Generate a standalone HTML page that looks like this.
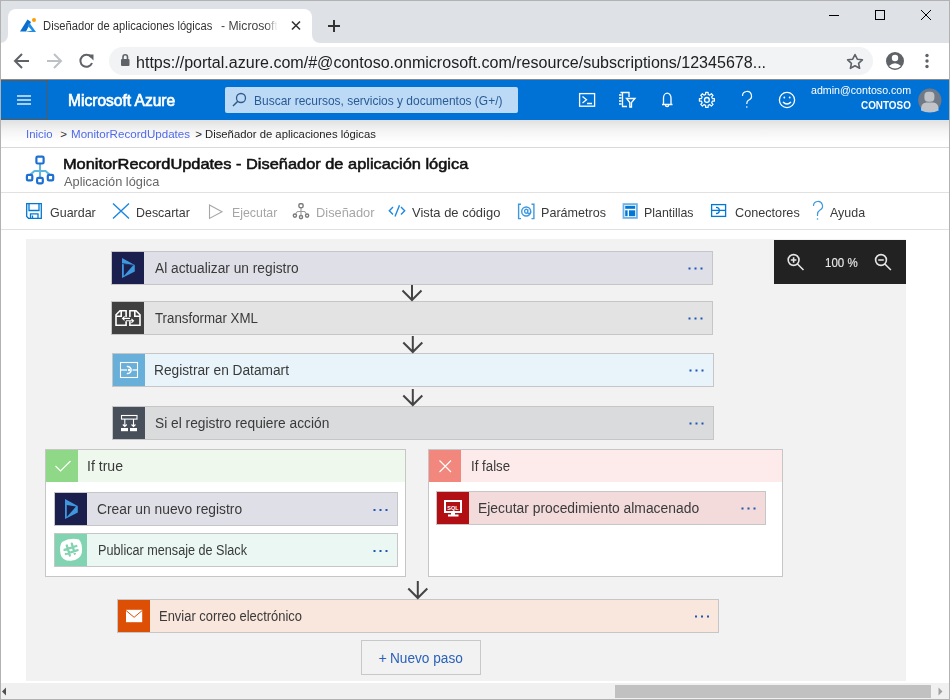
<!DOCTYPE html>
<html><head><meta charset="utf-8">
<style>
*{box-sizing:border-box;margin:0;padding:0}
html,body{width:950px;height:700px;overflow:hidden;background:#fff;font-family:"Liberation Sans",sans-serif;position:relative}
.a{position:absolute}
.tx{position:absolute;white-space:nowrap}
svg{position:absolute;left:0;top:0;overflow:visible}

</style></head><body>
<!-- tab strip -->
<div class="a" style="left:0;top:0;width:950px;height:43px;background:#dee1e6"></div>
<div class="a" style="left:0;top:34px;width:320px;height:9px;background:#fff"></div>
<div class="a" style="left:0;top:26px;width:8px;height:17px;background:#dee1e6;border-bottom-right-radius:8px"></div>
<div class="a" style="left:312px;top:26px;width:8px;height:17px;background:#dee1e6;border-bottom-left-radius:8px"></div>
<div class="a" style="left:8px;top:9px;width:304px;height:34px;background:#fff;border-radius:8px 8px 0 0"></div>
<!-- toolbar url pill -->
<div class="a" style="left:109px;top:47px;width:764px;height:28px;background:#f1f3f4;border-radius:14px"></div>
<div class="a" style="left:0;top:79px;width:950px;height:1px;background:#8d8883"></div>
<!-- azure header -->
<div class="a" style="left:0;top:80px;width:950px;height:40px;background:#0072d6"></div>
<div class="a" style="left:0;top:80px;width:48px;height:40px;border:1px solid #5a5a5a;border-left:none"></div>
<div class="a" style="left:225px;top:87px;width:293px;height:26px;background:#bcdaf6;border-radius:2px"></div>
<!-- breadcrumb shadow -->
<div class="a" style="left:0;top:120px;width:950px;height:22px;background:linear-gradient(#e0e0e0,#f3f3f3 45%,#fff)"></div>
<div class="a" style="left:0;top:147px;width:950px;height:1px;background:#d9d9d9"></div>
<div class="a" style="left:0;top:192px;width:950px;height:1px;background:#e1e1e1"></div>
<div class="a" style="left:0;top:229px;width:950px;height:1px;background:#e1e1e1"></div>
<!-- canvas -->
<div class="a" style="left:26px;top:239px;width:880px;height:442px;background:#f2f2f2"></div>
<!-- zoom box -->
<div class="a" style="left:774px;top:240px;width:132px;height:44px;background:#222"></div>
<!-- scrollbar -->
<div class="a" style="left:0;top:683px;width:950px;height:17px;background:#f0f0f0"></div>
<div class="a" style="left:615px;top:685px;width:316px;height:13px;background:#c1c1c1"></div>

<!-- cards -->
<div class="a" style="left:111px;top:251px;width:602px;height:34px;border:1px solid #c6c6c6;background:#dfdfe8"></div>
<div class="a" style="left:112px;top:252px;width:32px;height:32px;background:#1b1f4e"></div>
<div class="a" style="left:111px;top:301px;width:602px;height:34px;border:1px solid #c6c6c6;background:#e3e3e3"></div>
<div class="a" style="left:112px;top:302px;width:32px;height:32px;background:#404040"></div>
<div class="a" style="left:112px;top:353px;width:602px;height:34px;border:1px solid #c6c6c6;background:#e8f3fa"></div>
<div class="a" style="left:113px;top:354px;width:32px;height:32px;background:#68b0da"></div>
<div class="a" style="left:112px;top:406px;width:602px;height:34px;border:1px solid #c6c6c6;background:#dadbdd"></div>
<div class="a" style="left:113px;top:407px;width:32px;height:32px;background:#474f5a"></div>

<!-- if true -->
<div class="a" style="left:45px;top:449px;width:361px;height:128px;border:1px solid #c6c6c6;background:#fff"></div>
<div class="a" style="left:46px;top:450px;width:359px;height:32px;background:#eef8ec"></div>
<div class="a" style="left:46px;top:450px;width:32px;height:32px;background:#8fd887"></div>
<div class="a" style="left:54px;top:492px;width:344px;height:34px;border:1px solid #c6c6c6;background:#dfdfe8"></div>
<div class="a" style="left:55px;top:493px;width:32px;height:32px;background:#1b1f4e"></div>
<div class="a" style="left:54px;top:533px;width:344px;height:34px;border:1px solid #c6c6c6;background:#eaf7f3"></div>
<div class="a" style="left:55px;top:534px;width:32px;height:32px;background:#82d3b1"></div>

<!-- if false -->
<div class="a" style="left:428px;top:449px;width:355px;height:128px;border:1px solid #c6c6c6;background:#fff"></div>
<div class="a" style="left:429px;top:450px;width:353px;height:32px;background:#fdeaea"></div>
<div class="a" style="left:429px;top:450px;width:32px;height:32px;background:#f2877e"></div>
<div class="a" style="left:436px;top:491px;width:330px;height:34px;border:1px solid #c6c6c6;background:#f3dadb"></div>
<div class="a" style="left:437px;top:492px;width:32px;height:32px;background:#b20f14"></div>

<!-- email -->
<div class="a" style="left:117px;top:599px;width:602px;height:34px;border:1px solid #c6c6c6;background:#f9e6dc"></div>
<div class="a" style="left:118px;top:600px;width:32px;height:32px;background:#dc4f04"></div>

<!-- nuevo paso -->
<div class="a" style="left:361px;top:640px;width:120px;height:35px;border:1px solid #c8c8c8;background:#f2f2f2"></div>

<svg width="950" height="700">
  <!-- azure logo -->
  <path d="M27.5 19.5 L20 31.5 H26 L31 22 Z" fill="#0a6fcc"/>
  <path d="M29.5 23 L36 32 H25.5 L32 30.5 L27.5 25.5 Z" fill="#1e8ee6"/>
  <circle cx="34" cy="20" r="2" fill="#ff9c00"/>
  <!-- tab close -->
  <path d="M292 21.5 L300 29.5 M300 21.5 L292 29.5" stroke="#333" stroke-width="1.6"/>
  <!-- new tab plus -->
  <path d="M334 20 V32 M328 26 H340" stroke="#333" stroke-width="2"/>
  <!-- window controls -->
  <path d="M829 15.5 H839" stroke="#000" stroke-width="1"/>
  <rect x="875.5" y="10.5" width="9" height="9" fill="none" stroke="#000" stroke-width="1"/>
  <path d="M921 10 L931 20 M931 10 L921 20" stroke="#000" stroke-width="1"/>
  <g transform="translate(0,43)">
  <!-- back -->
  <path d="M15.5 18 H29 M22 11 L15 18 L22 25" fill="none" stroke="#5f6368" stroke-width="2"/>
  <path d="M47 18 H60.5 M54 11 L61 18 L54 25" fill="none" stroke="#bdc1c6" stroke-width="2"/>
  <path d="M91.2 14.2 A6 6 0 1 0 92 20" fill="none" stroke="#5f6368" stroke-width="2"/>
  <path d="M87.5 11.5 H93.5 V17.5 Z" fill="#5f6368"/>
  <rect x="121" y="16" width="8.5" height="7" rx="1" fill="#5f6368"/>
  <path d="M123 16.5 V14 A2.25 2.25 0 0 1 127.5 14 V16.5" fill="none" stroke="#5f6368" stroke-width="1.6"/>
  <path d="M855 11.5 L857.3 16.2 L862.4 16.8 L858.6 20.3 L859.6 25.3 L855 22.8 L850.4 25.3 L851.4 20.3 L847.6 16.8 L852.7 16.2 Z" fill="none" stroke="#5f6368" stroke-width="1.6" stroke-linejoin="round"/>
  <circle cx="895" cy="18" r="9" fill="#5f6368"/>
  <circle cx="895" cy="15" r="3.2" fill="#fff"/>
  <path d="M889 23 Q895 17.5 901 23 Q895 28 889 23 Z" fill="#fff"/>
  <circle cx="927" cy="12.5" r="1.7" fill="#5f6368"/>
  <circle cx="927" cy="18" r="1.7" fill="#5f6368"/>
  <circle cx="927" cy="23.5" r="1.7" fill="#5f6368"/>
  </g>
  <!-- hamburger -->
  <path d="M17 96 H31 M17 100 H31 M17 104 H31" stroke="#a9cdf1" stroke-width="2"/>
  <!-- search icon -->
  <circle cx="241" cy="98" r="4.5" fill="none" stroke="#305a8a" stroke-width="1.3"/>
  <path d="M237.8 101.2 L233 106" stroke="#305a8a" stroke-width="1.5"/>
  <!-- header icons -->
  <g fill="none" stroke="#fff" stroke-width="1.3">
    <rect x="579.6" y="93.6" width="15" height="12.6"/>
    <path d="M582.5 96.5 L586.5 99.8 L582.5 103 M587 103.5 H592"/>
    <path d="M620.5 92.5 H629 V97 M622.5 92.5 V106.5 H627 M619 95 H621.5 M619 98 H621.5 M619 101 H621.5 M619 104 H621.5"/>
    <path d="M626.5 98.5 H635 L631.5 102.5 V107 H629.8 V102.5 Z"/>
    <path d="M662 104.5 H672.5 M663.5 104.5 V98 A3.5 4.5 0 0 1 671 98 V104.5 M665.5 105 A1.6 1.6 0 0 0 668.7 105"/>
    <circle cx="706.9" cy="99.9" r="2.4"/>
    <circle cx="787" cy="100" r="7.6"/>
    <path d="M783 102 Q787 106 791 102"/>
  </g>
  <path d="M714.41 98.71 L714.41 101.09 L712.35 101.21 L711.67 102.83 L713.05 104.37 L711.37 106.05 L709.83 104.67 L708.21 105.35 L708.09 107.41 L705.71 107.41 L705.59 105.35 L703.97 104.67 L702.43 106.05 L700.75 104.37 L702.13 102.83 L701.45 101.21 L699.39 101.09 L699.39 98.71 L701.45 98.59 L702.13 96.97 L700.75 95.43 L702.43 93.75 L703.97 95.13 L705.59 94.45 L705.71 92.39 L708.09 92.39 L708.21 94.45 L709.83 95.13 L711.37 93.75 L713.05 95.43 L711.67 96.97 L712.35 98.59 Z" fill="none" stroke="#fff" stroke-width="1.2" stroke-linejoin="round"/>
  <path d="M742.5 96 A4.5 4.5 0 1 1 748.5 100.2 Q746.8 101.2 746.8 103.5 V104" fill="none" stroke="#fff" stroke-width="1.2"/>
  <circle cx="746.8" cy="107" r="0.8" fill="#fff"/>
  <circle cx="784.3" cy="97.5" r="0.9" fill="#fff"/>
  <circle cx="789.7" cy="97.5" r="0.9" fill="#fff"/>
  <!-- avatar -->
  <circle cx="929.8" cy="100.2" r="11.6" fill="#707a87"/>
  <rect x="924.4" y="91.8" width="10" height="10" rx="4" fill="#c0c3c7"/>
  <path d="M921 110.5 Q920.5 103 926 102.5 H933.5 Q939 103 938.6 110.5 Q934.5 112.5 929.8 112.5 Q925 112.5 921 110.5 Z" fill="#c0c3c7"/>
  <!-- title icon -->
  <g fill="none">
    <path d="M40 164 V177.5 M40 171 H34.5 L30.5 174.5 M40 171 H45.5 L49.5 174.5" stroke="#5cb6df" stroke-width="2"/>
    <rect x="36.4" y="156.7" width="7.2" height="6.8" rx="1.2" stroke="#1d6fd1" stroke-width="2.2"/>
    <rect x="26.9" y="174.9" width="5.4" height="5.5" rx="1.2" stroke="#1d6fd1" stroke-width="2.2"/>
    <rect x="37.1" y="177.9" width="5.7" height="5.4" rx="1.2" stroke="#1d6fd1" stroke-width="2.2"/>
    <rect x="47.8" y="174.9" width="5.4" height="5.5" rx="1.2" stroke="#1d6fd1" stroke-width="2.2"/>
  </g>
  <!-- toolbar icons -->
  <g fill="none" stroke="#0078d4" stroke-width="1.3">
    <path d="M26.7 203.7 H41.3 V218.3 H28.5 L26.7 216.5 Z"/>
    <path d="M29 203.7 V210.5 H39 V203.7 M30.5 218.3 V213.8 H38 V218.3 M32.5 215.5 V218.3"/>
    <path d="M113 203.5 L129 218.5 M129 203.5 L113 218.5" stroke="#1a86e0" stroke-width="1.4"/>
  </g>
  <path d="M209.5 205 L222 211.7 L209.5 218.4 Z" fill="none" stroke="#a6a6a6" stroke-width="1.1"/>
  <g fill="none" stroke="#7a7a7a" stroke-width="1.4">
    <rect x="298.9" y="203.7" width="4.2" height="4" rx="1.4"/>
    <circle cx="294.9" cy="215.6" r="1.6"/>
    <circle cx="301" cy="217.1" r="1.6"/>
    <circle cx="307.1" cy="215.6" r="1.6"/>
  </g>
  <path d="M301 207.7 V215.5 M297.5 211.5 H304.5 L306.6 214 M297.5 211.5 L295.4 214" fill="none" stroke="#9a9a9a" stroke-width="1.1"/>
  <g fill="none" stroke="#1e88e5" stroke-width="1.4">
    <path d="M393 207 L389.3 210.8 L393 214.6 M401 207 L404.7 210.8 L401 214.6 M399.5 205.3 L395 216.5"/>
  </g>
  <g fill="none" stroke="#3d98de" stroke-width="1.4">
    <path d="M521 204.2 H518.6 V218.6 H521 M531.5 204.2 H533.9 V218.6 H531.5"/>
    <circle cx="526.2" cy="211.5" r="4.5"/>
    <path d="M527.8 209.2 V212.5 Q527.8 213.8 529 213.8 Q530.7 213.8 530.7 211.5 M527.8 211.3 A1.6 2 0 1 1 527.8 211.2"/>
  </g>
  <rect x="622.6" y="203.2" width="15.2" height="15.6" fill="#6db2ea"/>
  <rect x="624.4" y="205" width="11.6" height="12" fill="#fff"/>
  <rect x="625.2" y="205.8" width="10" height="3" fill="#0078d4"/>
  <rect x="625.2" y="210.3" width="2.4" height="5.9" fill="#0078d4"/>
  <rect x="629" y="210.3" width="6.2" height="5.9" fill="#0078d4"/>
  <g fill="none" stroke="#0078d4" stroke-width="1.3">
    <rect x="711.6" y="204.6" width="14" height="11.8"/>
    <path d="M711.6 210.4 H725.6"/>
    <path d="M716 207.3 A3.3 3.1 0 1 1 716 213.5"/>
  </g>
  <path d="M813.5 206 A4.5 4.5 0 1 1 820 210 Q817.5 211.5 817.5 214.5 V216" fill="none" stroke="#3d98de" stroke-width="1.2"/>
  <circle cx="817.5" cy="219" r="0.8" fill="#3d98de"/>
  <!-- zoom box icons -->
  <g fill="none" stroke="#e6e6e6" stroke-width="1.6">
    <circle cx="793.6" cy="260" r="5.4"/>
    <path d="M797.5 264 L803.5 270 M790.8 260 H796.4 M793.6 257.2 V262.8"/>
    <circle cx="881" cy="260" r="5.4"/>
    <path d="M884.9 264 L890.9 270 M878.2 260 H883.8"/>
  </g>
  <!-- card icons -->
  <path d="M122 258 L134.8 265 L134.8 271.5 L122 278 Z" fill="#3f97de"/>
  <path d="M123.8 264 L133 265.6 L123.8 276 Z" fill="#1b1f4e"/>
  <path d="M122.2 263.6 L133.5 265.3" stroke="#1b1f4e" stroke-width="0.8"/>
  <g fill="none" stroke="#fff" stroke-width="1.6">
    <path d="M126.1 317 V310.8 H120 L116 314.8 V325.3 H126.1 V321.3 M121.2 311 V316.2 H116.2"/>
    <path d="M129.9 317 V310.8 H136 L140 314.8 V325.3 H129.9 V321.3 M134.8 311 V316.2 H139.8"/>
  </g>
  <g fill="none" stroke="#fff" stroke-width="1.1">
    <path d="M122.5 318.4 H130 M124.6 316.4 L122.5 318.4 L124.6 320.4 M126 320.8 H133.5 M131.4 318.8 L133.5 320.8 L131.4 322.8"/>
  </g>
  <g fill="none" stroke="#fff" stroke-width="1.1">
    <rect x="120.5" y="362.5" width="17" height="15"/>
    <path d="M120.5 370 H127 M132.5 370 H137.5" stroke-opacity="0.85" stroke-width="1.3"/>
    <path d="M126.8 366.6 A3.5 3.5 0 1 1 126.8 373.4" stroke-width="1.5"/>
  </g>
  <circle cx="129" cy="370" r="1.2" fill="#fff"/>
  <g fill="none" stroke="#fff" stroke-width="1.1">
    <rect x="121.5" y="415.5" width="15.5" height="3.6"/>
    <path d="M124.8 419 V427 M133.5 419 V427 M122.8 424.5 L124.8 426.5 L126.8 424.5 M131.5 424.5 L133.5 426.5 L135.5 424.5"/>
  </g>
  <rect x="121" y="428" width="7" height="3.2" fill="#fff"/>
  <rect x="130" y="428" width="7" height="3.2" fill="#fff"/>
  <path d="M55.5 466 L60.5 471 L70.5 461" fill="none" stroke="#fff" stroke-width="1.1"/>
  <path d="M439.5 460.5 L451 472 M451 460.5 L439.5 472" fill="none" stroke="#fff" stroke-width="1.1"/>
  <!-- crear icon -->
  <path d="M65 499 L77.8 506 L77.8 512.5 L65 519 Z" fill="#3f97de"/>
  <path d="M66.8 505 L76 506.6 L66.8 517 Z" fill="#1b1f4e"/>
  <!-- slack -->
  <path d="M62 542 Q70 537 79 539.5 Q83 544 81.8 553 Q80 560 71 560.8 Q62 561 60.5 554 Q59 546 62 542 Z" fill="#fff"/>
  <g stroke="#82d3b1" stroke-width="2.3" fill="none" stroke-linecap="round">
    <path d="M66.8 545.5 L69.8 555.5 M71.8 543.7 L74.8 553.7 M64.5 549.8 L76.3 546 M65.8 554 L77.6 550.2"/>
  </g>
  <!-- sql -->
  <rect x="445" y="501" width="16" height="11" fill="none" stroke="#fff" stroke-width="2"/>
  <path d="M452 513 V515 M454 513 V515 M448 515.5 H458.5" stroke="#fff" stroke-width="2"/>
  <text x="453" y="509.5" font-size="5.5" font-weight="bold" fill="#fff" text-anchor="middle" font-family="Liberation Sans">SQL</text>
  <!-- email -->
  <rect x="126" y="609.8" width="16.2" height="12.4" fill="#fff"/>
  <path d="M126 610.5 L134.1 617.3 L142.2 610.5" fill="none" stroke="#dc4f04" stroke-width="1"/>
  <!-- arrows -->
  <g fill="none" stroke="#444" stroke-width="2">
    <path d="M412 285 V300 M402.5 290.5 L412 300 L421.5 290.5"/>
    <path d="M412.8 336 V352 M403.3 342.5 L412.8 352 L422.3 342.5"/>
    <path d="M412.8 389 V405 M403.3 395.5 L412.8 405 L422.3 395.5"/>
    <path d="M417.8 581 V598 M408.3 588.5 L417.8 598 L427.3 588.5"/>
  </g>
  <!-- dots -->
  <g fill="#1f56b4">
    <rect x="688.5" y="267.5" width="2" height="2"/><rect x="694.5" y="267.5" width="2" height="2"/><rect x="700.5" y="267.5" width="2" height="2"/>
    <rect x="688.5" y="317.5" width="2" height="2"/><rect x="694.5" y="317.5" width="2" height="2"/><rect x="700.5" y="317.5" width="2" height="2"/>
    <rect x="689.5" y="369.5" width="2" height="2"/><rect x="695.5" y="369.5" width="2" height="2"/><rect x="701.5" y="369.5" width="2" height="2"/>
    <rect x="689.5" y="422.5" width="2" height="2"/><rect x="695.5" y="422.5" width="2" height="2"/><rect x="701.5" y="422.5" width="2" height="2"/>
    <rect x="373.5" y="509" width="2" height="2"/><rect x="379.5" y="509" width="2" height="2"/><rect x="385.5" y="509" width="2" height="2"/>
    <rect x="373.5" y="550" width="2" height="2"/><rect x="379.5" y="550" width="2" height="2"/><rect x="385.5" y="550" width="2" height="2"/>
    <rect x="741.5" y="507.5" width="2" height="2"/><rect x="747.5" y="507.5" width="2" height="2"/><rect x="753.5" y="507.5" width="2" height="2"/>
    <rect x="695" y="615.5" width="2" height="2"/><rect x="701" y="615.5" width="2" height="2"/><rect x="707" y="615.5" width="2" height="2"/>
  </g>
  <!-- scroll arrows -->
  <path d="M2 691.5 L6 687.5 V695.5 Z" fill="#505050"/>
  <path d="M942.5 691.5 L938.5 687.5 V695.5 Z" fill="#a0a0a0"/>
</svg>

<div class="tx" style="left:43.00px;top:20px;font-size:12.5px;line-height:12.5px;font-weight:normal;color:#333;letter-spacing:0.000px;transform:scaleX(0.8948);transform-origin:1.00px 0;">Diseñador de aplicaciones lógicas</div>
<div class="tx" style="left:220.60px;top:20px;font-size:12.5px;line-height:12.5px;font-weight:normal;color:#444;letter-spacing:0.000px;transform:scaleX(0.9751);transform-origin:0.00px 0;-webkit-mask-image:linear-gradient(90deg,#000 80%,transparent 100%);">- Microsoft</div>
<div class="tx" style="left:135.70px;top:55px;font-size:16px;line-height:16px;font-weight:normal;color:#202124;letter-spacing:0.000px;transform:scaleX(1.0031);transform-origin:1.00px 0;">https://portal.azure.com/#@contoso.onmicrosoft.com/resource/subscriptions/12345678...</div>
<div class="tx" style="left:67.90px;top:93px;font-size:16px;line-height:16px;font-weight:normal;color:#fff;letter-spacing:0.000px;transform:scaleX(0.9715);transform-origin:1.00px 0;-webkit-text-stroke:0.7px #fff;">Microsoft Azure</div>
<div class="tx" style="left:254.00px;top:94px;font-size:13.5px;line-height:13.5px;font-weight:normal;color:#285b94;letter-spacing:0.000px;transform:scaleX(0.8862);transform-origin:1.00px 0;">Buscar recursos, servicios y documentos (G+/)</div>
<div class="tx" style="left:811.40px;top:85px;font-size:11.5px;line-height:11.5px;font-weight:normal;color:#fff;letter-spacing:0.000px;transform:scaleX(0.9255);transform-origin:0.00px 0;">admin@contoso.com</div>
<div class="tx" style="left:861.30px;top:100px;font-size:10.5px;line-height:10.5px;font-weight:bold;color:#fff;letter-spacing:0.000px;transform:scaleX(0.9426);transform-origin:0.00px 0;">CONTOSO</div>
<div class="tx" style="left:25.60px;top:129px;font-size:11.5px;line-height:11.5px;font-weight:normal;color:#4f6ae8;letter-spacing:0.000px;transform:scaleX(0.9902);transform-origin:1.00px 0;">Inicio</div>
<div class="tx" style="left:60.20px;top:129px;font-size:11.5px;line-height:11.5px;font-weight:normal;color:#333;letter-spacing:0.000px;">&gt;</div>
<div class="tx" style="left:70.80px;top:129px;font-size:11.5px;line-height:11.5px;font-weight:normal;color:#4f6ae8;letter-spacing:0.000px;transform:scaleX(1.0067);transform-origin:0.00px 0;">MonitorRecordUpdates</div>
<div class="tx" style="left:195.30px;top:129px;font-size:11.5px;line-height:11.5px;font-weight:normal;color:#222;letter-spacing:0.000px;">&gt;</div>
<div class="tx" style="left:205.20px;top:129px;font-size:11.5px;line-height:11.5px;font-weight:normal;color:#222;letter-spacing:0.000px;transform:scaleX(0.9826);transform-origin:0.00px 0;">Diseñador de aplicaciones lógicas</div>
<div class="tx" style="left:62.50px;top:156px;font-size:15px;line-height:15px;font-weight:normal;color:#111;letter-spacing:0.000px;transform:scaleX(1.0926);transform-origin:1.00px 0;-webkit-text-stroke:0.55px #111;">MonitorRecordUpdates - Diseñador de aplicación lógica</div>
<div class="tx" style="left:64.20px;top:175px;font-size:13px;line-height:13px;font-weight:normal;color:#666;letter-spacing:0.000px;transform:scaleX(0.9836);transform-origin:0.00px 0;">Aplicación lógica</div>
<div class="tx" style="left:49.80px;top:206px;font-size:13px;line-height:13px;font-weight:normal;color:#3a3a3a;letter-spacing:0.000px;transform:scaleX(0.9595);transform-origin:0.00px 0;">Guardar</div>
<div class="tx" style="left:136.00px;top:206px;font-size:13px;line-height:13px;font-weight:normal;color:#3a3a3a;letter-spacing:0.000px;transform:scaleX(0.9550);transform-origin:1.00px 0;">Descartar</div>
<div class="tx" style="left:232.10px;top:206px;font-size:13px;line-height:13px;font-weight:normal;color:#a6a6a6;letter-spacing:0.000px;transform:scaleX(0.9480);transform-origin:1.00px 0;">Ejecutar</div>
<div class="tx" style="left:316.00px;top:206px;font-size:13px;line-height:13px;font-weight:normal;color:#a6a6a6;letter-spacing:0.000px;transform:scaleX(0.9877);transform-origin:1.00px 0;">Diseñador</div>
<div class="tx" style="left:412.10px;top:206px;font-size:13px;line-height:13px;font-weight:normal;color:#3a3a3a;letter-spacing:0.000px;transform:scaleX(0.9963);transform-origin:0.00px 0;">Vista de código</div>
<div class="tx" style="left:540.80px;top:206px;font-size:13px;line-height:13px;font-weight:normal;color:#3a3a3a;letter-spacing:0.000px;transform:scaleX(0.9657);transform-origin:1.00px 0;">Parámetros</div>
<div class="tx" style="left:643.90px;top:206px;font-size:13px;line-height:13px;font-weight:normal;color:#3a3a3a;letter-spacing:0.000px;transform:scaleX(0.9510);transform-origin:1.00px 0;">Plantillas</div>
<div class="tx" style="left:735.00px;top:206px;font-size:13px;line-height:13px;font-weight:normal;color:#3a3a3a;letter-spacing:0.000px;transform:scaleX(0.9734);transform-origin:0.00px 0;">Conectores</div>
<div class="tx" style="left:829.90px;top:206px;font-size:13px;line-height:13px;font-weight:normal;color:#3a3a3a;letter-spacing:0.000px;transform:scaleX(0.9573);transform-origin:0.00px 0;">Ayuda</div>
<div class="tx" style="left:824.80px;top:256px;font-size:13px;line-height:13px;font-weight:normal;color:#e8e8e8;letter-spacing:0.000px;transform:scaleX(0.8874);transform-origin:0.00px 0;-webkit-text-stroke:0.15px #e8e8e8;">100 %</div>
<div class="tx" style="left:154.50px;top:261px;font-size:14px;line-height:14px;font-weight:normal;color:#3a3a3a;letter-spacing:0.000px;transform:scaleX(0.9816);transform-origin:0.00px 0;">Al actualizar un registro</div>
<div class="tx" style="left:154.50px;top:311px;font-size:14px;line-height:14px;font-weight:normal;color:#3a3a3a;letter-spacing:0.000px;transform:scaleX(0.9493);transform-origin:0.00px 0;">Transformar XML</div>
<div class="tx" style="left:154.10px;top:363px;font-size:14px;line-height:14px;font-weight:normal;color:#3a3a3a;letter-spacing:0.000px;transform:scaleX(0.9801);transform-origin:1.00px 0;">Registrar en Datamart</div>
<div class="tx" style="left:155.10px;top:416px;font-size:14px;line-height:14px;font-weight:normal;color:#3a3a3a;letter-spacing:0.000px;transform:scaleX(0.9823);transform-origin:0.00px 0;">Si el registro requiere acción</div>
<div class="tx" style="left:87.40px;top:459px;font-size:14px;line-height:14px;font-weight:normal;color:#3a3a3a;letter-spacing:0.000px;transform:scaleX(1.0055);transform-origin:1.00px 0;">If true</div>
<div class="tx" style="left:471.30px;top:459px;font-size:14px;line-height:14px;font-weight:normal;color:#3a3a3a;letter-spacing:0.000px;transform:scaleX(0.9467);transform-origin:1.00px 0;">If false</div>
<div class="tx" style="left:96.80px;top:502px;font-size:14px;line-height:14px;font-weight:normal;color:#3a3a3a;letter-spacing:0.000px;transform:scaleX(0.9865);transform-origin:0.00px 0;">Crear un nuevo registro</div>
<div class="tx" style="left:97.50px;top:543px;font-size:14px;line-height:14px;font-weight:normal;color:#3a3a3a;letter-spacing:0.000px;transform:scaleX(0.9026);transform-origin:1.00px 0;">Publicar mensaje de Slack</div>
<div class="tx" style="left:478.20px;top:501px;font-size:14px;line-height:14px;font-weight:normal;color:#3a3a3a;letter-spacing:0.000px;transform:scaleX(0.9898);transform-origin:1.00px 0;">Ejecutar procedimiento almacenado</div>
<div class="tx" style="left:159.40px;top:609px;font-size:14px;line-height:14px;font-weight:normal;color:#3a3a3a;letter-spacing:0.000px;transform:scaleX(0.9224);transform-origin:1.00px 0;">Enviar correo electrónico</div>
<div class="tx" style="left:378.50px;top:651px;font-size:14px;line-height:14px;font-weight:normal;color:#2a62b8;letter-spacing:0.000px;">+</div>
<div class="tx" style="left:390.20px;top:651px;font-size:14px;line-height:14px;font-weight:normal;color:#2a62b8;letter-spacing:0.000px;transform:scaleX(0.9739);transform-origin:1.00px 0;">Nuevo paso</div>
<div class="a" style="left:0;top:0;width:950px;height:700px;border:1px solid #b2b2b2;pointer-events:none"></div>
</body></html>
